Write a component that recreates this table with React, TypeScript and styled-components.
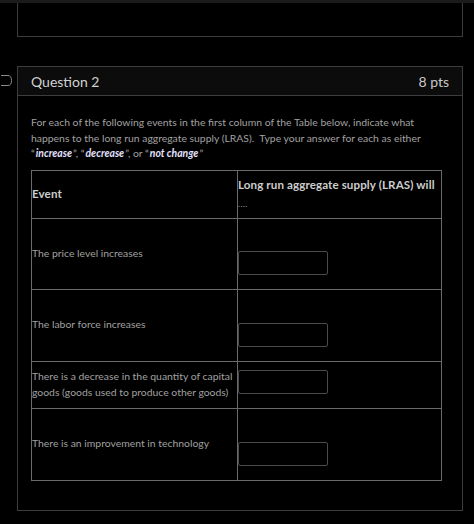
import styled, { createGlobalStyle } from "styled-components";

const GlobalStyle = createGlobalStyle`
  html, body {
    margin: 0;
    padding: 0;
    background: #000;
  }
  body {
    font-family: Lato, "Open Sans", sans-serif;
    color: #a3a3a3;
  }
`;

const Page = styled.div`
  width: 474px;
  height: 524px;
  overflow: hidden;
  background: #000;
`;

const TopStrip = styled.div`
  height: 3px;
  background: #1b1b1b;
`;

const Card = styled.section<{ $open?: boolean }>`
  position: relative;
  margin: ${({ $open }) => ($open ? "0 11px 29px 17px" : "0 11px 0 17px")};
  border: 1px solid #3d3d3d;
  border-top: ${({ $open }) => ($open ? "none" : "1px solid #3d3d3d")};
`;

const EmptyBody = styled.div`
  height: 33px;
`;

const Flag = styled.svg`
  position: absolute;
  left: -17px;
  top: 8px;
`;

const Header = styled.header`
  display: flex;
  align-items: center;
  justify-content: space-between;
  height: 28px;
  padding: 0 13px 0 13px;
  background: #0c0c0c;
  border-bottom: 1px solid #3d3d3d;
`;

const Title = styled.h2`
  margin: 0;
  font-size: 14px;
  font-weight: 400;
  color: #d2d2d2;
`;

const Points = styled.span`
  font-size: 14px;
  color: #c8c8c8;
`;

const Body = styled.div`
  padding: 19px 20px 29px 13px;
`;

const Prompt = styled.p`
  margin: 0 0 8px;
  font-size: 10.4px;
  line-height: 15.6px;
  color: #a2a2a2;
`;

const Answer = styled.strong`
  font-style: italic;
  font-weight: 700;
  color: #e4e0ff;
  margin: 0 1px;
`;

const Table = styled.table`
  width: 411px;
  border-collapse: collapse;
  table-layout: fixed;
`;

const Row = styled.tr<{ $h: number }>`
  height: ${({ $h }) => $h}px;
`;

const HeadCell = styled.th<{ $w?: number }>`
  width: ${({ $w }) => ($w ? `${$w}px` : "auto")};
  padding: 0;
  border: 1px solid #6a6a6a;
  text-align: left;
  vertical-align: middle;
  font-size: 11.6px;
  line-height: 18px;
  font-weight: 700;
  letter-spacing: 0.1px;
  color: #cdcdcd;
`;

const Dots = styled.span`
  font-size: 8px;
  color: #8a8a8a;
  letter-spacing: 0.5px;
`;

const EventCell = styled.td`
  padding: 0;
  border: 1px solid #6a6a6a;
  vertical-align: middle;
  font-size: 10.4px;
  line-height: 15.6px;
  color: #a0a0a0;
`;

const InputCell = styled.td`
  padding: 0 0 14px;
  border: 1px solid #6a6a6a;
  vertical-align: bottom;
`;

const AnswerInput = styled.input`
  display: block;
  box-sizing: border-box;
  width: 90px;
  height: 24px;
  margin: 0;
  background: #000;
  border: 1px solid #4a4a4a;
  border-radius: 2px;
  color: #ccc;
  font-family: inherit;
`;

const events = [
  { text: "The price level increases", h: 71 },
  { text: "The labor force increases", h: 72 },
  {
    text: "There is a decrease in the quantity of capital goods (goods used to produce other goods)",
    h: 47,
  },
  { text: "There is an improvement in technology", h: 72 },
];

export default function App() {
  return (
    <Page>
      <GlobalStyle />
      <TopStrip />
      <Card $open>
        <EmptyBody />
      </Card>
      <Card>
        <Flag width="12" height="12" viewBox="0 0 12 12">
          <path
            d="M0 0.5 H7 Q10.5 0.5 10.5 5.5 Q10.5 10.5 7 10.5 H0"
            fill="none"
            stroke="#8a8a8a"
            strokeWidth="1"
          />
        </Flag>
        <Header>
          <Title>Question 2</Title>
          <Points>8 pts</Points>
        </Header>
        <Body>
          <Prompt>
            For each of the following events in the first column of the Table below, indicate what
            happens to the long run aggregate supply (LRAS).&nbsp; Type your answer for each as either
            “<Answer>increase</Answer>”, “<Answer>decrease</Answer>”, or “<Answer>not change</Answer>”
          </Prompt>
          <Table>
            <thead>
              <Row $h={48}>
                <HeadCell $w={205}>Event</HeadCell>
                <HeadCell>
                  Long run aggregate supply (LRAS) will
                  <br />
                  <Dots>....</Dots>
                </HeadCell>
              </Row>
            </thead>
            <tbody>
              {events.map((e) => (
                <Row key={e.text} $h={e.h}>
                  <EventCell>{e.text}</EventCell>
                  <InputCell>
                    <AnswerInput type="text" aria-label={e.text} />
                  </InputCell>
                </Row>
              ))}
            </tbody>
          </Table>
        </Body>
      </Card>
    </Page>
  );
}
